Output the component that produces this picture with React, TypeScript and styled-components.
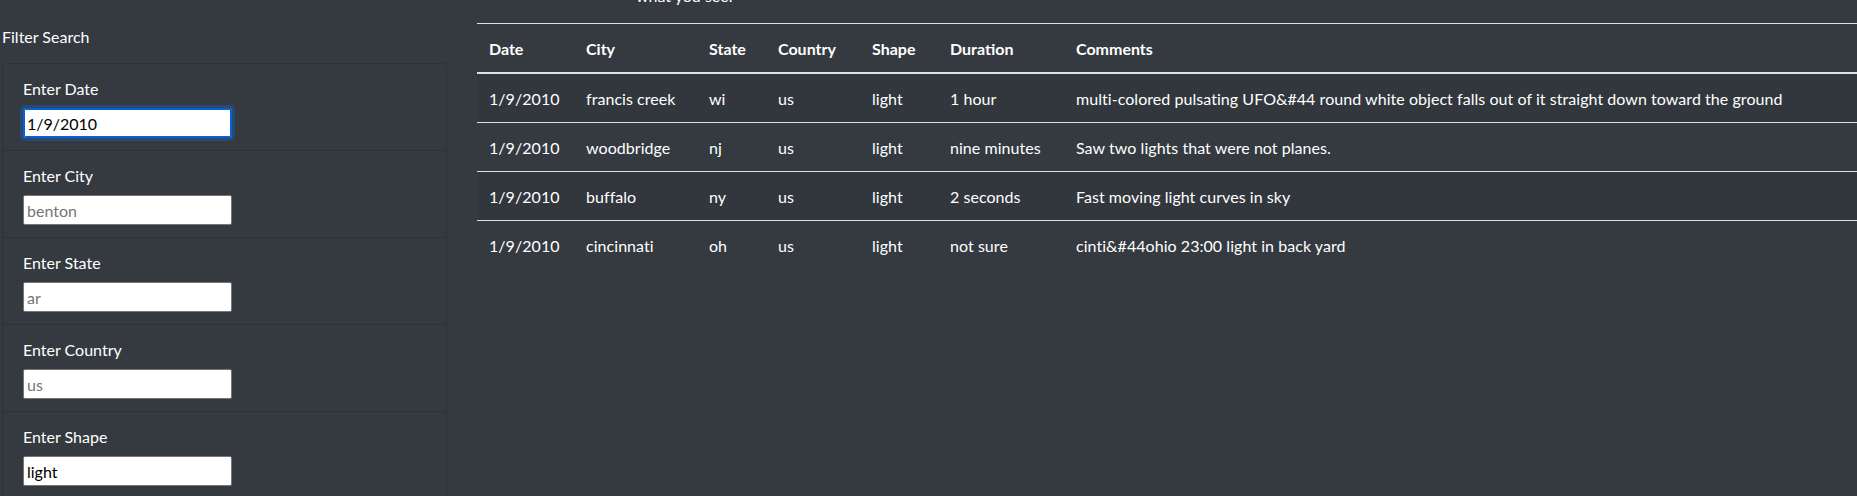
import styled, { createGlobalStyle } from 'styled-components';

const GlobalStyle = createGlobalStyle`
  html, body {
    margin: 0;
    height: 100%;
  }
  body {
    background: #343a40;
    color: #fff;
    font-family: Lato, "Noto Sans", sans-serif;
    font-size: 16px;
    line-height: 1.5;
    overflow: hidden;
  }
  * {
    box-sizing: border-box;
  }
`;

interface Sighting {
  datetime: string;
  city: string;
  state: string;
  country: string;
  shape: string;
  duration: string;
  comments: string;
}

const sightings: Sighting[] = [
  {
    datetime: '1/9/2010',
    city: 'francis creek',
    state: 'wi',
    country: 'us',
    shape: 'light',
    duration: '1 hour',
    comments:
      'multi-colored pulsating UFO&#44 round white object falls out of it straight down toward the ground',
  },
  {
    datetime: '1/9/2010',
    city: 'woodbridge',
    state: 'nj',
    country: 'us',
    shape: 'light',
    duration: 'nine minutes',
    comments: 'Saw two lights that were not planes.',
  },
  {
    datetime: '1/9/2010',
    city: 'buffalo',
    state: 'ny',
    country: 'us',
    shape: 'light',
    duration: '2 seconds',
    comments: 'Fast moving light curves in sky',
  },
  {
    datetime: '1/9/2010',
    city: 'cincinnati',
    state: 'oh',
    country: 'us',
    shape: 'light',
    duration: 'not sure',
    comments: 'cinti&#44ohio 23:00 light in back yard',
  },
];

const filters = [
  { id: 'datetime', label: 'Enter Date', value: '1/9/2010', placeholder: '1/1/2010', focused: true },
  { id: 'city', label: 'Enter City', value: '', placeholder: 'benton' },
  { id: 'state', label: 'Enter State', value: '', placeholder: 'ar' },
  { id: 'country', label: 'Enter Country', value: '', placeholder: 'us' },
  { id: 'shape', label: 'Enter Shape', value: 'light', placeholder: 'circle' },
];

const columns = [
  { title: 'Date', width: 97 },
  { title: 'City', width: 123 },
  { title: 'State', width: 69 },
  { title: 'Country', width: 94 },
  { title: 'Shape', width: 78 },
  { title: 'Duration', width: 126 },
  { title: 'Comments' },
];

const Page = styled.div`
  display: grid;
  grid-template-columns: 445px 1fr;
  column-gap: 30px;
  padding-left: 2px;
`;

const Sidebar = styled.aside`
  display: flex;
  flex-direction: column;
`;

const SidebarTitle = styled.h5`
  margin: 25px 0 14px;
  font-size: 16px;
  font-weight: 400;
  line-height: 24px;
`;

const FilterList = styled.ul`
  margin: 0;
  padding: 0;
  list-style: none;
  border: 1px solid rgba(0, 0, 0, 0.125);
  border-radius: 4px;
`;

const FilterItem = styled.li`
  display: flex;
  flex-direction: column;
  align-items: flex-start;
  padding: 12px 20px;
  border-bottom: 1px solid rgba(0, 0, 0, 0.125);

  &:last-child {
    border-bottom: none;
  }
`;

const FilterLabel = styled.label`
  margin-top: 1px;
  margin-bottom: 7px;
  line-height: 24px;
`;

const FilterInput = styled.input<{ $focused?: boolean }>`
  width: 209px;
  height: 30px;
  padding: 1px 3px 0;
  font-family: inherit;
  font-size: 16px;
  color: #000;
  background: #fff;
  border: 1px solid ${(p) => (p.$focused ? '#0b5fd6' : '#767676')};
  border-radius: 2px;
  outline: none;
  box-shadow: ${(p) =>
    p.$focused ? 'inset 0 0 0 1px #0b5fd6, 0 0 0 3px rgba(0, 123, 255, 0.25)' : 'none'};

  &::placeholder {
    color: #757575;
  }
`;

const Main = styled.main`
  display: flex;
  flex-direction: column;
  min-width: 0;
`;

const Lede = styled.div`
  height: 8px;
  overflow: hidden;
  display: flex;
  align-items: flex-end;
  padding-left: 159px;
`;

const LedeText = styled.p`
  margin: 0;
  line-height: 24px;
`;

const Table = styled.table`
  width: 100%;
  margin-top: 15px;
  border-collapse: collapse;
  table-layout: fixed;
  color: #fff;
`;

const HeadCell = styled.th`
  padding: 13px 12px 11px;
  text-align: left;
  font-weight: 700;
  line-height: 24px;
  border-top: 1px solid #dee2e6;
  border-bottom: 2px solid #dee2e6;
  white-space: nowrap;
`;

const Row = styled.tr`
  &:nth-child(odd) {
    background: rgba(0, 0, 0, 0.05);
  }
`;

const Cell = styled.td`
  padding: 13px 12px 11px;
  line-height: 24px;
  border-top: 1px solid #dee2e6;
  white-space: nowrap;
  letter-spacing: 0.05px;
`;

export default function App() {
  return (
    <>
      <GlobalStyle />
      <Page>
        <Sidebar>
          <SidebarTitle>Filter Search</SidebarTitle>
          <FilterList>
            {filters.map((f) => (
              <FilterItem key={f.id}>
                <FilterLabel htmlFor={f.id}>{f.label}</FilterLabel>
                <FilterInput
                  id={f.id}
                  type="text"
                  placeholder={f.placeholder}
                  defaultValue={f.value}
                  $focused={f.focused}
                />
              </FilterItem>
            ))}
          </FilterList>
        </Sidebar>
        <Main>
          <Lede>
            <LedeText>what you see.</LedeText>
          </Lede>
          <Table>
            <colgroup>
              {columns.map((c) => (
                <col key={c.title} style={c.width ? { width: c.width } : undefined} />
              ))}
            </colgroup>
            <thead>
              <tr>
                {columns.map((c) => (
                  <HeadCell key={c.title}>{c.title}</HeadCell>
                ))}
              </tr>
            </thead>
            <tbody>
              {sightings.map((s, i) => (
                <Row key={i}>
                  <Cell>{s.datetime}</Cell>
                  <Cell>{s.city}</Cell>
                  <Cell>{s.state}</Cell>
                  <Cell>{s.country}</Cell>
                  <Cell>{s.shape}</Cell>
                  <Cell>{s.duration}</Cell>
                  <Cell>{s.comments}</Cell>
                </Row>
              ))}
            </tbody>
          </Table>
        </Main>
      </Page>
    </>
  );
}
